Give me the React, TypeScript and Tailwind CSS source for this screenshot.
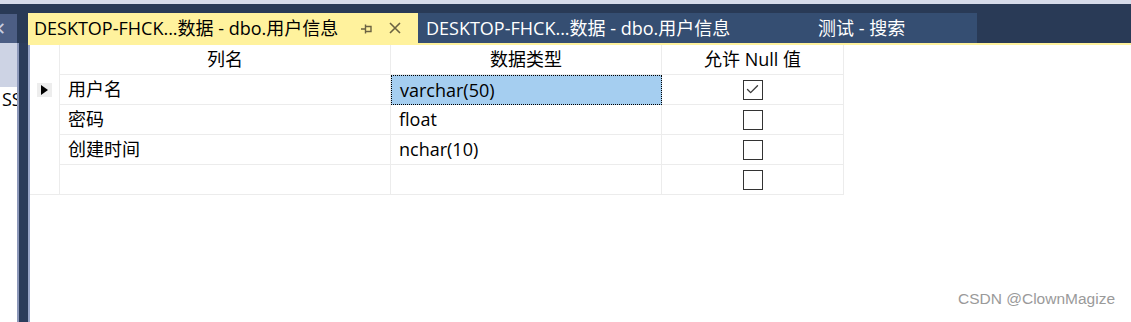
import { Check } from "lucide-react";

const font = { fontFamily: '"Open Sans", "Noto Sans CJK SC", "Microsoft YaHei", sans-serif' };

const rows = [
  { name: "用户名", type: "varchar(50)", nullable: true, current: true },
  { name: "密码", type: "float", nullable: false, current: false },
  { name: "创建时间", type: "nchar(10)", nullable: false, current: false },
  { name: "", type: "", nullable: false, current: false },
];

function PinIcon() {
  return (
    <svg width="12" height="12" viewBox="0 0 12 12" fill="none" stroke="#6b6242" strokeWidth="1.4">
      <path d="M0 6h4M4.5 1.5v9M4.5 3.5h5.5v5h-5.5" />
    </svg>
  );
}

function CloseIcon() {
  return (
    <svg width="12" height="12" viewBox="0 0 12 12" fill="none" stroke="#6b6242" strokeWidth="1.6">
      <path d="M1 1l10 10M11 1L1 11" />
    </svg>
  );
}

function Box({ checked }: { checked: boolean }) {
  return (
    <div className="w-[20px] h-[20px] border-[1.5px] border-[#333] bg-white flex items-center justify-center">
      {checked && <Check size={15} strokeWidth={2.2} color="#3a3a3a" />}
    </div>
  );
}

export default function App() {
  return (
    <div className="w-[1131px] h-[322px] bg-white overflow-hidden relative flex flex-col text-black" style={font}>
      <div className="h-[4px] bg-[#d6dbe9] shrink-0" />
      <div className="flex flex-1 min-h-0">
        {/* left docked panel */}
        <div className="w-[17px] flex flex-col shrink-0 overflow-hidden">
          <div className="h-[10px] bg-[#293a56]" />
          <div className="h-[29px] bg-[#4c5e84] relative overflow-hidden">
            <span className="absolute left-[-9px] top-[2px] text-[18px] leading-[24px] text-[#c8cee0]">✕</span>
          </div>
          <div className="h-[44px] bg-[#cdd3e4]" />
          <div className="flex-1 bg-white text-[18px] leading-[24px] pl-[2px] whitespace-nowrap overflow-hidden">SSMS</div>
        </div>

        <div className="flex-1 flex flex-col min-w-0">
          {/* tab strip */}
          <div className="h-[39px] bg-[#293a56] flex items-end pl-[11px] shrink-0">
            <div className="h-[30px] bg-[#fff29d] w-[390px] flex items-center pl-[6px] text-[18px] whitespace-nowrap">
              <span className="w-[327px]">DESKTOP-FHCK...数据 - dbo.用户信息</span>
              <span className="mt-[1px]"><PinIcon /></span>
              <span className="ml-[16px]"><CloseIcon /></span>
            </div>
            <div className="h-[30px] bg-[#354e72] w-[559px] flex items-center text-[18px] text-white whitespace-nowrap">
              <span className="pl-[8px] w-[400px]">DESKTOP-FHCK...数据 - dbo.用户信息</span>
              <span>测试 - 搜索</span>
            </div>
          </div>

          <div className="flex flex-1 min-h-0">
            <div className="w-[2px] bg-[#8c98b9]" />
            <div className="w-[9px] bg-[#2b3c5b]" />
            <div className="flex-1 flex flex-col min-w-0">
              <div className="h-[2px] bg-[#fff29d]" />
              <div className="flex flex-1">
                <div className="w-[2px] bg-[#98a5c8]" />
                {/* designer grid */}
                <div className="grid grid-cols-[30px_331px_271px_182px] auto-rows-[30px] self-start text-[18px]">
                  <div className="border-r border-[#ececec]" />
                  <div className="border-r border-b border-[#ececec] flex items-center justify-center">列名</div>
                  <div className="border-r border-b border-[#ececec] flex items-center justify-center">数据类型</div>
                  <div className="border-r border-b border-[#ececec] flex items-center justify-center">允许 Null 值</div>

                  {rows.map((r, i) => (
                    <div key={i} className="contents">
                      <div className={`border-r border-[#ececec] flex items-center justify-center ${i === rows.length - 1 ? "border-b" : ""}`}>
                        {r.current && (
                          <div className="w-[15px] h-[14px] bg-[#ededed] flex items-center justify-center">
                            <svg width="7" height="10" viewBox="0 0 7 10"><path d="M0 0L7 5L0 10Z" fill="#000" /></svg>
                          </div>
                        )}
                      </div>
                      <div className="border-r border-b border-[#ececec] flex items-center pl-[8px]">{r.name}</div>
                      {r.current ? (
                        <div className="border border-dotted border-black bg-[#a5cef0] flex items-center pl-[8px]">{r.type}</div>
                      ) : (
                        <div className="border-r border-b border-[#ececec] flex items-center pl-[8px]">{r.type}</div>
                      )}
                      <div className="border-r border-b border-[#ececec] flex items-center justify-center">
                        <Box checked={r.nullable} />
                      </div>
                    </div>
                  ))}
                </div>
              </div>
            </div>
          </div>
        </div>
      </div>

      <div
        className="absolute right-[16px] bottom-[12px] text-[15.5px] text-[#9a9a9a]"
        style={{ fontFamily: '"Liberation Sans", Arial, sans-serif' }}
      >
        CSDN @ClownMagize
      </div>
    </div>
  );
}
